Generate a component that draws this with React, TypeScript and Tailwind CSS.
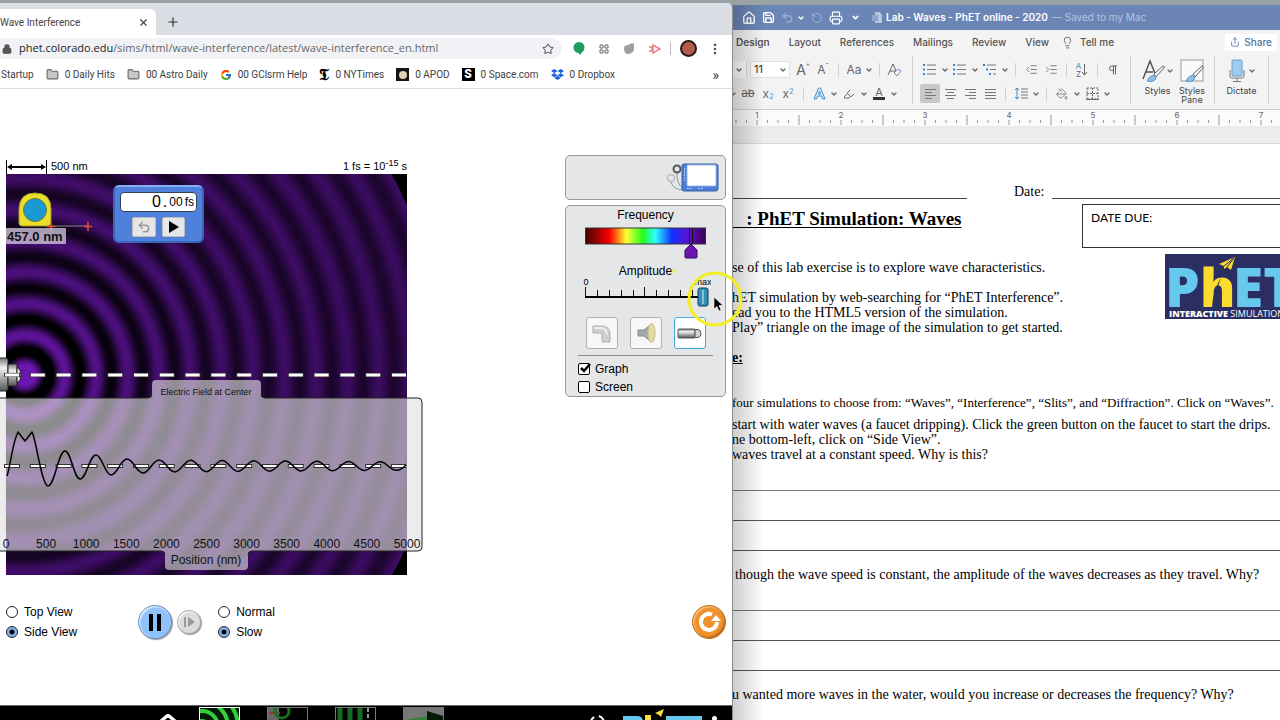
import { useState, type ReactNode } from "react";
import {
  ChevronDown,
  Folder,
  House,
  IndentDecrease,
  IndentIncrease,
  Lightbulb,
  List,
  ListOrdered,
  ListTree,
  Lock,
  MoreVertical,
  PaintBucket,
  Pilcrow,
  Plus,
  Printer,
  RotateCcw,
  Save,
  Share,
  Star,
  Undo2,
  Highlighter,
  X,
} from "lucide-react";
import { FcGoogle } from "react-icons/fc";
import { FaDropbox } from "react-icons/fa";

const SOURCE = { x: 25, y: 201 };
const WAVELENGTH = 31.4;
const REACH = 418;

// Colour of the light wave at a distance from the source
const waveStops = Array.from({ length: REACH / 2 + 1 }, (_, i) => {
  const r = i * 2;
  const amplitude = 0.12 + 0.5 * Math.exp(-r / 90);
  const phase = Math.cos(((r - 8.6) / WAVELENGTH) * 2 * Math.PI);
  const level = Math.min(1, Math.max(0, 0.36 + amplitude * (r < 8 ? 0.9 : phase)));
  const rgb = [118, 24, 194].map((c) => Math.round(c * level)).join(",");
  return { offset: r / REACH, color: `rgb(${rgb})` };
});

// Electric field along the centre line, smooth between its extremes
function buildFieldPath() {
  const peaks = [
    [48, 20], [65, -15], [80, 13], [96, -11], [111, 9], [127, -7], [143, 7],
  ];
  for (let i = 0; i < 16; i++) {
    const size = 6 - i * 0.12;
    peaks.push([159 + i * 15.8, i % 2 === 0 ? -size : size]);
  }
  let d = "M7 302 C11 290 12 270 18 258 L25 267 L32 258";
  let [px, py] = [32, -34];
  peaks.forEach(([x, y], i) => {
    const c = (x - px) * 0.4;
    d += ` C${px + (i === 0 ? 4 : c)} ${292 + py + (i === 0 ? 6 : 0)} ${x - c} ${292 + y} ${x} ${292 + y}`;
    px = x;
    py = y;
  });
  return d + " C400 297 403 294 406 291";
}

const fieldPath = buildFieldPath();
const axisTicks = [0, 500, 1000, 1500, 2000, 2500, 3000, 3500, 4000, 4500, 5000];

function WaveCanvas() {
  return (
    <svg width="424" height="403" viewBox="0 0 424 403" className="block" role="img" aria-label="Wave area">
      <defs>
        <radialGradient id="wave" gradientUnits="userSpaceOnUse" cx={SOURCE.x} cy={SOURCE.y} r={REACH}>
          {waveStops.map((s) => (
            <stop key={s.offset} offset={s.offset} stopColor={s.color} />
          ))}
          <stop offset="1" stopColor="#000" />
        </radialGradient>
        <linearGradient id="metal" x1="0" x2="0" y1="0" y2="1">
          <stop offset="0" stopColor="#777" />
          <stop offset="0.3" stopColor="#f0f0f0" />
          <stop offset="1" stopColor="#555" />
        </linearGradient>
      </defs>
      <rect x="6" y="0" width="401" height="401" fill="url(#wave)" />
      <g stroke="#222" strokeWidth="1" fill="url(#metal)">
        <rect x="-4" y="184" width="12" height="33" rx="2" />
        <rect x="8" y="190" width="9" height="22" rx="1" />
        <path d="M17 193 q4 3 4 8 q0 5 -4 8z" fill="#eee" />
      </g>
      <line x1="4" x2="406" y1="201" y2="201" stroke="#333" strokeWidth="4" strokeDasharray="16 9.8" />
      <line x1="5" x2="406" y1="201" y2="201" stroke="#fff" strokeWidth="3" strokeDasharray="14 11.8" />

      <path
        d="M-5 224 H148 Q152 224 152 220 V210 Q152 206 156 206 H257 Q261 206 261 210 V220 Q261 224 265 224 H418 Q422 224 422 228 V373 Q422 377 418 377 H252 Q248 377 248 381 V392 Q248 396 244 396 H169 Q165 396 165 392 V381 Q165 377 161 377 H-5z"
        fill="#e1e1e1"
        fillOpacity="0.62"
      />
      <path
        d="M-5 224 H148 Q152 224 152 220 M261 220 Q261 224 265 224 H418 Q422 224 422 228 V373 Q422 377 418 377 H252 Q248 377 248 381 M165 381 Q165 377 161 377 H-5"
        fill="none"
        stroke="#222"
      />
      <g stroke="#777" strokeOpacity="0.2" strokeDasharray="3 2">
        {axisTicks.map((t) => (
          <line key={t} x1={6 + t * 0.08} x2={6 + t * 0.08} y1="225" y2="360" />
        ))}
        <line x1="6" x2="407" y1="258" y2="258" />
        <line x1="6" x2="407" y1="326" y2="326" />
        <line x1="6" x2="407" y1="360" y2="360" />
      </g>
      <line x1="4" x2="406" y1="292" y2="292" stroke="#333" strokeWidth="4" strokeDasharray="16 9.8" />
      <line x1="5" x2="406" y1="292" y2="292" stroke="#fff" strokeWidth="2" strokeDasharray="14 11.8" />
      <path d={fieldPath} fill="none" stroke="#000" strokeWidth="1.5" strokeLinejoin="round" />
      <g fontSize="12" fill="#111" textAnchor="middle">
        {axisTicks.map((t) => (
          <text key={t} x={6 + t * 0.0802} y="374">{t}</text>
        ))}
        <text x="206" y="390">Position (nm)</text>
        <text x="206" y="221" fontSize="9">Electric Field at Center</text>
      </g>

      <path d="M19 49 V34 Q20 19 35 19 Q51 19 51 35 V48 Q51 52 47 52 H22 Q19 52 19 49z" fill="#e9de2c" stroke="#a89c1c" />
      <circle cx="35" cy="36" r="11.5" fill="#1b99d2" stroke="#6d7a30" />
      <path d="M51 52 H88" stroke="#888" />
      <path d="M47 52.5 H55 M51 48 V57 M84 52.5 H92 M88 48 V57" stroke="#e8502a" strokeWidth="1.5" />
      <rect x="6" y="54" width="60" height="16" rx="1" fill="#cfc8d8" fillOpacity="0.78" />
      <text x="7" y="67" fontSize="13" fontWeight="bold" fill="#111">457.0 nm</text>
    </svg>
  );
}

function Timer() {
  return (
    <div className="absolute left-[113px] top-[11px] w-[91px] rounded-[6px] border-2 border-[#3a66b8] border-t-[#86aef0] bg-[#4f80dc] px-[5px] pb-[4px] pt-[5px]">
      <div className="flex h-[20px] items-center justify-end gap-[2px] rounded-[4px] border border-[#345] bg-white pr-[2px] text-black">
        <span className="flex gap-[2px] text-base leading-none"><span>0</span><span>.</span></span>
        <span className="text-xs">00</span>
        <span className="text-xs">fs</span>
      </div>
      <div className="mt-[5px] flex justify-center gap-[6px]">
        <button aria-label="Reset timer" className="flex h-[20px] w-[24px] items-center justify-center rounded-[2px] border border-[#bbb] bg-[#e6e6e6]">
          <Undo2 size={14} strokeWidth={2.5} className="text-[#999]" />
        </button>
        <button aria-label="Start timer" className="flex h-[20px] w-[23px] items-center justify-center rounded-[2px] border border-[#bbb] bg-[#e6e6e6]">
          <svg width="10" height="12"><path d="M0 0 L10 6 L0 12z" fill="#000" /></svg>
        </button>
      </div>
    </div>
  );
}

function RadioPair({ name, options }: { name: string; options: string[] }) {
  const [value, setValue] = useState(options[1]);
  return (
    <div className="flex flex-col gap-[6px]">
      {options.map((o) => (
        <label key={o} className="flex h-[14px] items-center gap-[6px] whitespace-nowrap text-xs text-black">
          <input
            type="radio"
            name={name}
            checked={value === o}
            onChange={() => setValue(o)}
            className="size-[12px] appearance-none rounded-full border border-[#222] bg-white checked:bg-[radial-gradient(circle,#000_0_2px,#85b4f0_3px)]"
          />
          {o}
        </label>
      ))}
    </div>
  );
}

function CheckRow({ label, initial }: { label: string; initial: boolean }) {
  const [on, setOn] = useState(initial);
  return (
    <label className="flex h-[18px] items-center gap-[5px] text-xs text-black">
      <span className="relative size-[12px]">
        <input
          type="checkbox"
          checked={on}
          onChange={() => setOn(!on)}
          className="block size-[12px] appearance-none rounded-[2px] border border-black bg-white"
        />
        {on && (
          <svg className="pointer-events-none absolute -top-[2px] left-0" width="15" height="14">
            <path d="M3 7 L6 10 L12 3" fill="none" stroke="#000" strokeWidth="2.5" />
          </svg>
        )}
      </span>
      {label}
    </label>
  );
}

function SceneButton({ label, active, children }: { label: string; active?: boolean; children: ReactNode }) {
  return (
    <button
      aria-label={label}
      className={`flex size-[32px] items-center justify-center rounded-[3px] border bg-white ${active ? "border-[#46a6dc]" : "border-[#999] opacity-70"}`}
    >
      <svg width="26" height="26" viewBox="0 0 26 26">{children}</svg>
    </button>
  );
}

function ControlPanels() {
  return (
    <aside className="flex w-[161px] shrink-0 flex-col gap-[5px]">
      <div className="flex h-[45px] items-center justify-end rounded-[5px] border border-[#999] bg-[#e5e6e8] pr-[6px]">
        <svg width="53" height="32" viewBox="0 0 53 32">
          <path d="M11 11 Q10 22 18 27 M5 20 Q7 28 18 28" fill="none" stroke="#8a9aa0" />
          <circle cx="11" cy="7" r="3.5" fill="none" stroke="#555" strokeWidth="2" />
          <circle cx="5" cy="16" r="3.5" fill="none" stroke="#bbb" strokeWidth="1.5" />
          <rect x="16" y="2" width="36" height="27" rx="2" fill="#4a7fd6" stroke="#3560aa" />
          <rect x="21" y="3" width="29" height="21" rx="1" fill="#fff" stroke="#9bb7e8" />
          <path d="M21 26.5 H27 M32 26.5 H38 M18.5 6 V19" stroke="#b8cdf4" strokeDasharray="2 1" />
        </svg>
      </div>
      <div className="rounded-[5px] border border-[#999] bg-[#e5e6e8] px-[12px] pt-[2px] text-xs text-black">
        <div className="text-center leading-[14px]">Frequency</div>
        <div className="relative mx-auto mt-[5px] h-[32px] w-[121px]">
          <svg width="121" height="32">
            <defs>
              <linearGradient id="spectrum">
                <stop offset="0" stopColor="#400000" />
                <stop offset="0.2" stopColor="#ff0000" />
                <stop offset="0.34" stopColor="#ffff30" />
                <stop offset="0.48" stopColor="#20ff20" />
                <stop offset="0.58" stopColor="#30ffff" />
                <stop offset="0.72" stopColor="#1030ff" />
                <stop offset="0.86" stopColor="#6010d0" />
                <stop offset="1" stopColor="#38004c" />
              </linearGradient>
            </defs>
            <rect x="0.5" y="1" width="120" height="16" fill="url(#spectrum)" stroke="#333" />
            <path d="M104.5 1 V17 M107.5 1 V17" stroke="#111" />
            <path d="M106 17 L112 23 V30 Q112 31 111 31 H101 Q100 31 100 30 V23z" fill="#6a15ad" stroke="#3a0668" />
          </svg>
          <input type="range" aria-label="Frequency" defaultValue={88} className="absolute inset-0 opacity-0" />
        </div>
        <div className="mt-[5px] text-center leading-[14px]">Amplitude</div>
        <div className="relative mx-auto h-[32px] w-[130px]">
          <svg width="130" height="32">
            <g fontSize="9" textAnchor="middle">
              <text x="5" y="7">0</text>
              <text x="122" y="7">max</text>
            </g>
            <path d="M4.5 9 V19 H122 M16.5 12 V19 M28.5 12 V19 M40.5 12 V19 M52.5 12 V19 M63.5 9 V19 M75.5 12 V19 M87.5 12 V19 M99.5 12 V19 M111.5 12 V19" fill="none" stroke="#111" strokeWidth="1" />
            <path d="M4 19 H122" stroke="#000" strokeWidth="2" />
            <rect x="117" y="10" width="10" height="18" rx="2" fill="#3191b8" stroke="#0d3c52" />
            <path d="M122 12 V26" stroke="#d9eef6" />
          </svg>
          <input type="range" aria-label="Amplitude" defaultValue={100} className="absolute inset-0 opacity-0" />
        </div>
        <div className="mt-[7px] flex justify-center gap-[12px]">
          <SceneButton label="Water">
            <path d="M4 6 H13 Q21 6 21 15 V22 H13 V15 Q13 13 11 13 H4z" fill="#c4c8c8" stroke="#999" />
            <path d="M5 8 H13 Q18 9 18 15" fill="none" stroke="#f2f2f2" strokeWidth="2" />
          </SceneButton>
          <SceneButton label="Sound">
            <path d="M5 10 H11 L17 5 V21 L11 16 H5z" fill="#8b8f93" stroke="#666" />
            <ellipse cx="18.5" cy="13" rx="3.5" ry="9.5" fill="#e0d68a" stroke="#b5a959" />
          </SceneButton>
          <SceneButton label="Light" active>
            <rect x="1" y="9" width="17" height="9" rx="1" fill="url(#metal)" stroke="#555" />
            <path d="M18 9.5 H21 Q24 10 24 13.5 Q24 17 21 17.5 H18z" fill="#d0d0d0" stroke="#555" />
          </SceneButton>
        </div>
        <hr className="mb-[4px] mt-[6px] border-[#888]" />
        <CheckRow label="Graph" initial />
        <CheckRow label="Screen" initial={false} />
      </div>
    </aside>
  );
}

function ScreenThumb({ selected, children }: { selected?: boolean; children: ReactNode }) {
  return (
    <button aria-label="Screen" className={`h-[27px] w-[41px] overflow-hidden border bg-black ${selected ? "border-white" : "border-[#777]"}`}>
      <svg width="39" height="25" fill="none">{children}</svg>
    </button>
  );
}

function SimNavBar() {
  return (
    <nav className="mt-auto flex h-[15px] shrink-0 items-start overflow-hidden border-t border-[#666] bg-black pl-[158px] pr-[15px] pt-px">
      <button aria-label="Home" className="mr-[21px] pt-[7px] text-white">
        <House size={20} strokeWidth={4} />
      </button>
      <div className="flex gap-[27px]">
        <ScreenThumb selected>
          <rect width="39" height="25" fill="#041a06" />
          {[6, 16, 26, 36].map((r) => (
            <circle key={r} cx="2" cy="19" r={r} stroke="#2fd03a" strokeWidth="4" />
          ))}
        </ScreenThumb>
        <ScreenThumb>
          <rect width="11" height="25" fill="#666" />
          <path d="M2 5 H12 M6 2 H8" stroke="#a02c38" strokeWidth="2" />
          <circle cx="14" cy="3" r="7" stroke="#167022" strokeWidth="3" />
        </ScreenThumb>
        <ScreenThumb>
          <path d="M4 0 V25 M14 0 V25 M24 0 V25" stroke="#176a22" strokeWidth="5" />
          <path d="M32 0 V25" stroke="#999" strokeDasharray="4 2" strokeWidth="2" />
        </ScreenThumb>
        <ScreenThumb>
          <rect width="39" height="25" fill="#777" />
          <path d="M0 12 L23 8 V25 H0z" fill="#37803c" />
          <path d="M23 3 L39 8 V25 H23z" fill="#051a07" />
        </ScreenThumb>
      </div>
      <svg className="ml-auto mr-[16px] shrink-0" width="16" height="14" fill="none" stroke="#fff" strokeWidth="2">
        <path d="M1 13 L4 10 M9 9 Q14 11 14 16" />
      </svg>
      <svg className="shrink-0" width="84" height="14" viewBox="0 0 84 14">
        <path d="M1 9 H15 Q21 9 21 15 H1z M44 9 H80 V15 H44z" fill="#67c8ee" />
        <path d="M23 8 H29 V15 H23z" fill="#f8e03a" />
        <path d="M33 6 L42 2 L39 10 L37 8z" fill="#f8e03a" />
      </svg>
      <span className="ml-[6px] mt-[9px] size-[5px] shrink-0 rounded-full bg-white" />
    </nav>
  );
}

function Bookmark({ icon, label }: { icon?: ReactNode; label: string }) {
  return (
    <a href="#" className="flex shrink-0 items-center gap-[6px] whitespace-nowrap">
      {icon}
      {label}
    </a>
  );
}

const folder = <Folder size={13} strokeWidth={2} className="fill-[#c4c6c9] text-[#666]" />;

function BrowserWindow() {
  return (
    <section className="relative z-10 flex min-w-0 flex-col overflow-hidden rounded-tr-[5px] bg-white font-[Roboto,sans-serif] shadow-[1px_0_0_#8d8d8d]">
      <div className="flex h-[32px] shrink-0 items-end bg-[#dadde4]">
        <div className="flex h-[26px] w-[156px] items-center justify-between rounded-tr-[6px] bg-white pr-[7px] text-[10px] text-[#444]">
          <span>Wave Interference</span>
          <button aria-label="Close tab"><X size={11} strokeWidth={2.5} /></button>
        </div>
        <button aria-label="New tab" className="mb-[6px] ml-[10px] text-[#333]"><Plus size={14} strokeWidth={2} /></button>
      </div>
      <div className="flex h-[27px] shrink-0 items-center">
        <div className="flex h-[21px] flex-1 items-center rounded-r-full bg-[#f1f2f5] pl-[2px] pr-[8px]">
          <Lock size={10} strokeWidth={3} className="fill-[#555] text-[#555]" />
          <div className="ml-[7px] flex-1 whitespace-nowrap font-['Open_Sans',sans-serif] text-[11px] text-[#666]">
            <span className="text-[#222]">phet.colorado.edu</span>/sims/html/wave-interference/latest/wave-interference_en.html
          </div>
          <button aria-label="Bookmark this page"><Star size={12} className="text-[#444]" /></button>
        </div>
        <div className="flex items-center gap-[13px] pl-[11px] pr-[10px]">
          <svg width="12" height="13"><circle cx="6" cy="5.5" r="5.5" fill="#1d9d60" /><path d="M5 10 H9 L7 13z" fill="#1d9d60" /></svg>
          <svg width="12" height="12" fill="none" stroke="#666"><path d="M2 2 H5 V5 H2z M7 2 H10 V5 H7z M2 7 H5 V10 H2z M7 7 H10 V10 H7z" /></svg>
          <svg width="12" height="13"><path d="M1 6 Q1 3 5 3 L9 1 L11 2 V8 Q9 12 5 12 Q1 12 1 6z" fill="#a0a0a0" /></svg>
          <svg width="13" height="12" fill="none" stroke="#ee8087" strokeWidth="1.5"><path d="M5 2 L12 6 L5 10z M1 4 H4 V8 H1" /></svg>
          <span className="-mx-[4px] h-[13px] w-px bg-[#bbb]" />
          <span className="size-[17px] rounded-full border-2 border-[#2b1a18] bg-[#b25a4b]" />
          <button aria-label="Menu" className="-ml-[2px]"><MoreVertical size={14} strokeWidth={2.5} className="text-[#555]" /></button>
        </div>
      </div>
      <div className="flex h-[27px] shrink-0 items-center gap-[12px] border-b border-[#dcdcdc] pb-[1px] pl-px pr-[13px] text-[10px] text-[#3c4043]">
        <Bookmark label="Startup" />
        <Bookmark icon={folder} label="0 Daily Hits" />
        <Bookmark icon={folder} label="00 Astro Daily" />
        <Bookmark icon={<FcGoogle size={12} />} label="00 GClsrm Help" />
        <Bookmark icon={<span className="font-['Liberation_Serif',serif] text-base font-bold leading-none text-black">𝕿</span>} label="0 NYTimes" />
        <Bookmark icon={<svg width="13" height="13"><rect width="13" height="13" fill="#171310" /><circle cx="7" cy="7" r="4" fill="#e2d2b5" /></svg>} label="0 APOD" />
        <Bookmark icon={<span className="size-[13px] bg-black text-center text-xs font-black leading-[13px] text-white">S</span>} label="0 Space.com" />
        <Bookmark icon={<FaDropbox size={13} className="text-[#1a63dd]" />} label="0 Dropbox" />
        <button className="ml-auto text-sm leading-none" aria-label="More bookmarks">»</button>
      </div>

      <main className="font-['Liberation_Sans',sans-serif]">
        <div className="flex justify-between pr-[6px] pt-[66px]">
          <div>
            <div className="flex h-[19px] items-center justify-between pl-[6px] pr-[17px] pt-[4px] text-[11px] text-black">
              <span className="flex items-center gap-[4px]">
                <svg width="41" height="14" stroke="#000">
                  <path d="M0.5 0 V14 M40.5 0 V14" />
                  <path d="M4 7 H37" strokeWidth="2" />
                  <path d="M1 7 L6 4 V10z M40 7 L35 4 V10z" stroke="none" />
                </svg>
                500 nm
              </span>
              <span>1 fs = 10<sup className="text-[9px]">-15</sup> s</span>
            </div>
            <div className="relative">
              <WaveCanvas />
              <Timer />
            </div>
          </div>
          <ControlPanels />
        </div>
        <div className="mt-[28px] flex items-center pl-[6px] pr-[6px]">
          <RadioPair name="view" options={["Top View", "Side View"]} />
          <button aria-label="Pause" className="ml-[61px] flex size-[34px] items-center justify-center gap-[4px] rounded-full border border-[#6f93c4] bg-[#8fc1fb] shadow-[inset_1px_1px_2px_#fff,1px_1px_1px_#999]">
            <span className="h-[17px] w-[4px] bg-black" />
            <span className="h-[17px] w-[4px] bg-black" />
          </button>
          <button aria-label="Step" className="ml-[5px] flex size-[24px] items-center justify-center rounded-full border border-[#aaa] bg-[#dcdcdc] shadow-[inset_1px_1px_1px_#fff,1px_1px_1px_#999]">
            <svg width="12" height="12" fill="#999"><path d="M1 1 H3 V11 H1z M5 1 L12 6 L5 11z" /></svg>
          </button>
          <div className="ml-[17px]">
            <RadioPair name="speed" options={["Normal", "Slow"]} />
          </div>
          <button aria-label="Reset all" className="ml-auto flex size-[34px] items-center justify-center rounded-full border border-[#b97224] bg-[#f0922b] shadow-[inset_1px_1px_2px_#fbd3a0,inset_-1px_-1px_2px_#a85c10]">
            <svg width="24" height="24" viewBox="0 0 24 24">
              <path d="M15 4.5 A8 8 0 1 0 20 12" fill="none" stroke="#fff" strokeWidth="4" />
              <path d="M14 11 L19 5 L24 11z" fill="#fff" />
            </svg>
          </button>
        </div>
      </main>
      <SimNavBar />
    </section>
  );
}

function Chev() {
  return (
    <button aria-label="Options" className="flex w-[10px] shrink-0 justify-center text-[#666]">
      <ChevronDown size={8} strokeWidth={4} />
    </button>
  );
}

function Tool({ label, children, on }: { label: string; children: ReactNode; on?: boolean }) {
  return (
    <button
      aria-label={label}
      className={`flex h-[19px] w-[20px] shrink-0 items-center justify-center text-[#666] ${on ? "rounded-[2px] bg-[#c8c8c8]" : ""}`}
    >
      {children}
    </button>
  );
}

function Sep() {
  return <span className="mx-[5px] h-[14px] w-px shrink-0 bg-[#d0d0d0]" />;
}

function GroupRule() {
  return <span className="mt-[2px] h-[48px] w-px shrink-0 bg-[#cfcfcf]" />;
}

function Lines({ rows }: { rows: string }) {
  return (
    <svg width="13" height="12" stroke="#777" strokeWidth="1" shapeRendering="crispEdges">
      <path d={rows} />
    </svg>
  );
}

// List glyph with blue markers, each row pushed in by its indent
function ListGlyph({ indents }: { indents: number[] }) {
  return (
    <svg width="14" height="13" fill="none">
      {indents.map((x, i) => (
        <g key={i}>
          <path d={`M${x} ${2 + i * 4.5} h2`} stroke="#3b88c9" strokeWidth="2" />
          <path d={`M${x + 4} ${2 + i * 4.5} H13`} stroke="#777" />
        </g>
      ))}
    </svg>
  );
}

function BrushIcon({ x, y }: { x: number; y: number }) {
  return (
    <g transform={`translate(${x} ${y})`} stroke="#666" strokeWidth="1">
      <path d="M16 0 L7 8 L9 11 L17 2 Q18 0 16 0z" fill="#f5f5f5" />
      <path d="M7 9 Q2 10 0 15 Q7 17 9 12z" fill="#8dbde8" stroke="#5a96c8" />
    </g>
  );
}

function Ribbon() {
  return (
    <div className="flex h-[56px] shrink-0 overflow-hidden border-b border-[#cfcfcf] bg-[#f3f3f3]">
      <div className="flex shrink-0 flex-col gap-[4px] pr-[7px] pt-[6px]">
        <div className="flex h-[19px] items-center">
          <span className="flex h-[17px] w-[15px] items-center justify-center border-r border-[#ddd] bg-white"><Chev /></span>
          <span className="relative ml-[3px] flex items-center">
            <select aria-label="Font size" className="h-[17px] w-[40px] appearance-none border border-[#e2e2e2] bg-white pl-[3px] text-[11px] leading-none text-[#333]">
              <option>11</option>
            </select>
            <span className="pointer-events-none absolute right-[2px]"><Chev /></span>
          </span>
          <span className="ml-[3px] flex"><Tool label="Grow font"><span className="text-sm">A</span><sup className="text-[8px]">^</sup></Tool></span>
          <Tool label="Shrink font"><span className="text-xs">A</span><sup className="text-[8px]">ˇ</sup></Tool>
          <Sep />
          <Tool label="Change case"><span className="text-xs">Aa</span></Tool>
          <Chev />
          <Sep />
          <Tool label="Clear formatting">
            <svg width="16" height="16"><path d="M1 13 L6 2 L11 13 M3 9 H9" fill="none" stroke="#666" /><path d="M7 11 L11 7 L14 9 L10 14z" fill="#f3f3f3" stroke="#a774b8" /></svg>
          </Tool>
        </div>
        <div className="flex h-[21px] items-center">
          <span className="-ml-[4px]"><Chev /></span>
          <Tool label="Strikethrough"><span className="text-[11px] line-through">ab</span></Tool>
          <Tool label="Subscript"><span className="text-xs">x<sub className="text-[7px] text-[#4a8fc8]">2</sub></span></Tool>
          <Tool label="Superscript"><span className="text-xs">x<sup className="text-[7px] text-[#4a8fc8]">2</sup></span></Tool>
          <Sep />
          <Tool label="Text effects">
            <svg width="13" height="13"><path d="M1 12 L5.5 1 H7.5 L12 12 H9.5 L8.5 9 H4.5 L3.5 12z M5.5 7 H7.5 L6.5 4z" fill="#d8eafa" stroke="#4a8fc8" /></svg>
          </Tool>
          <Chev />
          <Tool label="Highlight"><Highlighter size={12} /></Tool>
          <Chev />
          <Tool label="Font color">
            <span className="flex flex-col items-center text-[11px] leading-[10px]">A<span className="h-[3px] w-[12px] bg-[#333]" /></span>
          </Tool>
          <Chev />
        </div>
      </div>
      <GroupRule />
      <div className="flex shrink-0 flex-col gap-[4px] px-[7px] pt-[6px]">
        <div className="flex h-[19px] items-center">
          <Tool label="Bullets"><ListGlyph indents={[0, 0, 0]} /></Tool>
          <Chev />
          <Tool label="Numbering"><ListGlyph indents={[0, 0, 0]} /></Tool>
          <Chev />
          <Tool label="Multilevel list"><ListGlyph indents={[0, 3, 6]} /></Tool>
          <Chev />
          <Sep />
          <Tool label="Decrease indent"><IndentDecrease size={13} strokeWidth={1.5} /></Tool>
          <Tool label="Increase indent"><IndentIncrease size={13} strokeWidth={1.5} /></Tool>
          <Sep />
          <Tool label="Sort">
            <span className="text-[8px] leading-[8px]"><span className="block text-[#3b88c9]">A</span><span className="block text-[#7b4b90]">Z</span></span>
            <svg width="7" height="14" stroke="#666" fill="none"><path d="M3.5 1 V12 M1 9 L3.5 12 L6 9" /></svg>
          </Tool>
          <Sep />
          <Tool label="Show marks"><Pilcrow size={12} /></Tool>
        </div>
        <div className="flex h-[21px] items-center">
          <Tool label="Align left" on><Lines rows="M1 1H12M1 4H8M1 7H12M1 10H8" /></Tool>
          <Tool label="Center"><Lines rows="M1 1H12M3 4H10M1 7H12M3 10H10" /></Tool>
          <Tool label="Align right"><Lines rows="M1 1H12M5 4H12M1 7H12M5 10H12" /></Tool>
          <Tool label="Justify"><Lines rows="M1 1H12M1 4H12M1 7H12M1 10H12" /></Tool>
          <Sep />
          <Tool label="Line spacing">
            <svg width="14" height="13" fill="none"><path d="M3 1 V12 M1 3 L3 1 L5 3 M1 10 L3 12 L5 10" stroke="#3b88c9" /><path d="M7 2H14M7 5H14M7 8H14M7 11H14" stroke="#777" /></svg>
          </Tool>
          <Chev />
          <Sep />
          <Tool label="Shading"><PaintBucket size={12} strokeWidth={1.5} /></Tool>
          <Chev />
          <Tool label="Borders">
            <svg width="13" height="13" stroke="#666" fill="none"><path d="M1 6.5H12M6.5 1V12M1 1H12V12H1z" strokeDasharray="2 1" /><path d="M0 12.5H13" /></svg>
          </Tool>
          <Chev />
        </div>
      </div>
      <GroupRule />
      <div className="flex shrink-0 gap-[4px] px-[9px] pt-[5px] text-center text-[9px] leading-[9px] text-[#444]">
        <button className="flex w-[35px] flex-col items-center gap-[3px]">
          <span className="flex items-center">
            <svg width="24" height="24" fill="none"><path d="M2 20 L9 2 L15 17 M5 13 H12" stroke="#555" strokeWidth="1.5" /><BrushIcon x={6} y={7} /></svg>
            <Chev />
          </span>
          Styles
        </button>
        <button className="flex w-[26px] flex-col items-center gap-[3px]">
          <svg width="24" height="24"><rect x="1" y="1" width="22" height="21" fill="#fafafa" stroke="#999" /><BrushIcon x={6} y={7} /></svg>
          Styles Pane
        </button>
      </div>
      <GroupRule />
      <div className="flex shrink-0 px-[9px] pt-[5px] text-[9px] leading-[9px] text-[#444]">
        <button className="flex w-[35px] flex-col items-center gap-[3px]">
          <span className="flex items-center">
            <svg width="20" height="24"><rect x="5" y="1" width="10" height="16" rx="1" fill="#9fcbee" stroke="#6a9fc8" /><path d="M3 11 V17 Q3 19 5 19 H15 Q17 19 17 17 V11 M10 19 V22 M6 22.5 H14" fill="none" stroke="#777" /></svg>
            <Chev />
          </span>
          Dictate
        </button>
      </div>
      <GroupRule />
    </div>
  );
}

function Ruler() {
  const ticks = Array.from({ length: 54 }, (_, i) => ({ x: 4 + i * 10.5, step: (i + 6) % 8 }));
  return (
    <div className="h-[34px] shrink-0 overflow-hidden border-b border-[#d8d8d8] bg-[#ececec]">
      <svg width="600" height="16" className="block bg-[#fbfbfb]" stroke="#999">
        {ticks.map(({ x, step }) => (
          <path key={x} d={step === 0 ? `M${x} 10 V15` : step === 4 ? `M${x} 5 V15` : `M${x} 10 V13`} />
        ))}
        <g fontSize="8" fill="#666" stroke="none" textAnchor="middle">
          {[1, 2, 3, 4, 5, 6, 7].map((n) => (
            <text key={n} x={25 + (n - 1) * 84} y="8">{n}</text>
          ))}
        </g>
      </svg>
    </div>
  );
}

function PhetLogo() {
  return (
    <svg width="115" height="65" viewBox="0 0 115 65" className="ml-auto block bg-[#2a2e62]" role="img" aria-label="PhET Interactive Simulations">
      <g fontFamily="'Open Sans', sans-serif" fontWeight="800">
        <text x="0" y="53" fontSize="55" fill="#67c8ee">P</text>
        <text x="35" y="53" fontSize="53" fill="#fadb2e">h</text>
        <text x="68" y="53" fontSize="55" fill="#67c8ee">ET</text>
        <text x="4" y="63" fontSize="9" fill="#fff">INTERACTIVE <tspan fontWeight="400">SIMULATIONS</tspan></text>
      </g>
      <path d="M47 53 Q48 36 56 24 Q50 38 51 53z" fill="#2a2e62" />
      <path d="M54 10 L70 3 L66 16 L62 13 L59 15 L59 12z" fill="#fadb2e" />
      <path d="M59 12 L69 4 L62 13" fill="none" stroke="#2a2e62" />
    </svg>
  );
}

function AnswerLines() {
  return (
    <div>
      <div className="h-[29px] border-b border-[#777]" />
      <div className="h-[30px] border-b border-[#555]" />
      <div className="h-[30px] border-b border-[#555]" />
    </div>
  );
}

function Worksheet() {
  return (
    <article className="flex-1 overflow-hidden whitespace-nowrap bg-white pt-[40px] font-['Liberation_Serif',serif] text-sm leading-[15px] text-black">
      <div className="flex h-[15px]">
        <span className="w-[235px] shrink-0 border-b border-[#444]" />
        <span className="ml-[47px]">Date:</span>
        <span className="ml-[8px] flex-1 border-b border-[#444]" />
      </div>
      <div className="mt-[5px] flex">
        <div className="w-[350px] shrink-0">
          <h1 className="mt-[3px] whitespace-pre text-[19px] font-bold leading-[24px] underline underline-offset-2">{"   : PhET Simulation: Waves"}</h1>
          <p className="mt-[29px]">se of this lab exercise is to explore wave characteristics.</p>
          <p className="mt-[15px]">hET simulation by web-searching for “PhET Interference”.</p>
          <p>ead you to the HTML5 version of the simulation.</p>
          <p>Play” triangle on the image of the simulation to get started.</p>
          <p className="mt-[15px] font-bold underline">e:</p>
        </div>
        <div className="min-w-0 flex-1 overflow-hidden">
          <div className="h-[44px] border border-r-0 border-[#333] pl-[8px] pt-[5px] font-[Lato,sans-serif] text-xs">DATE DUE:</div>
          <div className="mt-[6px]"><PhetLogo /></div>
        </div>
      </div>
      <p className="mt-[30px] text-[13px] leading-[15px]">four simulations to choose from: “Waves”, “Interference”, “Slits”, and “Diffraction”. Click on “Waves”.</p>
      <p className="mt-[7px]">start with water waves (a faucet dripping). Click the green button on the faucet to start the drips.</p>
      <p>ne bottom-left, click on “Side View”.</p>
      <p>waves travel at a constant speed. Why is this?</p>
      <AnswerLines />
      <p className="mt-[16px] pl-[3px]">though the wave speed is constant, the amplitude of the waves decreases as they travel. Why?</p>
      <AnswerLines />
      <p className="mt-[16px]">u wanted more waves in the water, would you increase or decreases the frequency? Why?</p>
    </article>
  );
}

function WordWindow() {
  return (
    <section className="relative mt-[2px] flex min-w-0 flex-col overflow-hidden bg-white font-[Inter,sans-serif]">
      <header className="flex h-[25px] shrink-0 items-center bg-[#6b86b6] pl-[10px] text-white">
        <div className="flex items-center gap-[6px]">
          <button aria-label="Home"><House size={14} strokeWidth={2.5} /></button>
          <button aria-label="Save"><Save size={13} strokeWidth={2.5} /></button>
          <button aria-label="Undo" className="flex items-center text-[#9fb3d4]"><Undo2 size={13} /><ChevronDown size={8} strokeWidth={4} className="ml-[3px] text-white" /></button>
          <button aria-label="Redo" className="text-[#9fb3d4]"><RotateCcw size={12} /></button>
          <button aria-label="Print"><Printer size={14} /></button>
          <button aria-label="Customize" className="ml-[2px]"><ChevronDown size={9} strokeWidth={4} /></button>
        </div>
        <div className="ml-[12px] flex items-center gap-[4px] whitespace-nowrap text-[10px]">
          <svg width="10" height="11"><path d="M3 0 H8 L10 3 V11 H3z" fill="#b8c5dd" /><rect y="3" width="6" height="6" fill="#8ea4cb" /></svg>
          <span className="font-semibold">Lab - Waves - PhET online - 2020</span>
          <span className="text-[#b4c4e0]">— Saved to my Mac</span>
        </div>
      </header>
      <div className="flex h-[24px] shrink-0 items-center gap-[19px] bg-[#f4f4f4] pl-[4px] text-[10px] font-medium text-[#555]">
        <button className="font-semibold">Design</button>
        <button>Layout</button>
        <button>References</button>
        <button>Mailings</button>
        <button>Review</button>
        <button>View</button>
        <button className="-ml-[7px] flex items-center gap-[6px] whitespace-nowrap"><Lightbulb size={13} strokeWidth={1.5} />Tell me</button>
        <button className="ml-auto mr-[3px] flex h-[17px] items-center gap-[4px] bg-white px-[5px] text-[#5471a5]"><Share size={10} />Share</button>
      </div>
      <Ribbon />
      <Ruler />
      <Worksheet />
      <div className="pointer-events-none absolute inset-y-0 left-0 w-[32px] bg-linear-to-r from-black/20 to-transparent" />
    </section>
  );
}

export default function App() {
  return (
    <div className="relative grid h-screen min-h-[720px] grid-cols-[183fr_137fr] overflow-hidden bg-[#9aa3a3] pt-[3px]">
      <BrowserWindow />
      <WordWindow />
      <svg className="pointer-events-none absolute left-[670px] top-[266px] z-20" width="76" height="64">
        <circle cx="4" cy="5" r="2" fill="#f0ee40" fillOpacity="0.8" />
        <circle cx="45" cy="33" r="26" fill="none" stroke="#f3ee22" strokeWidth="3" />
        <path d="M44 31 V43 L47 40.5 L49 45 L51 44 L49 39.5 H53z" fill="#000" stroke="#fff" strokeWidth="0.6" />
      </svg>
    </div>
  );
}
